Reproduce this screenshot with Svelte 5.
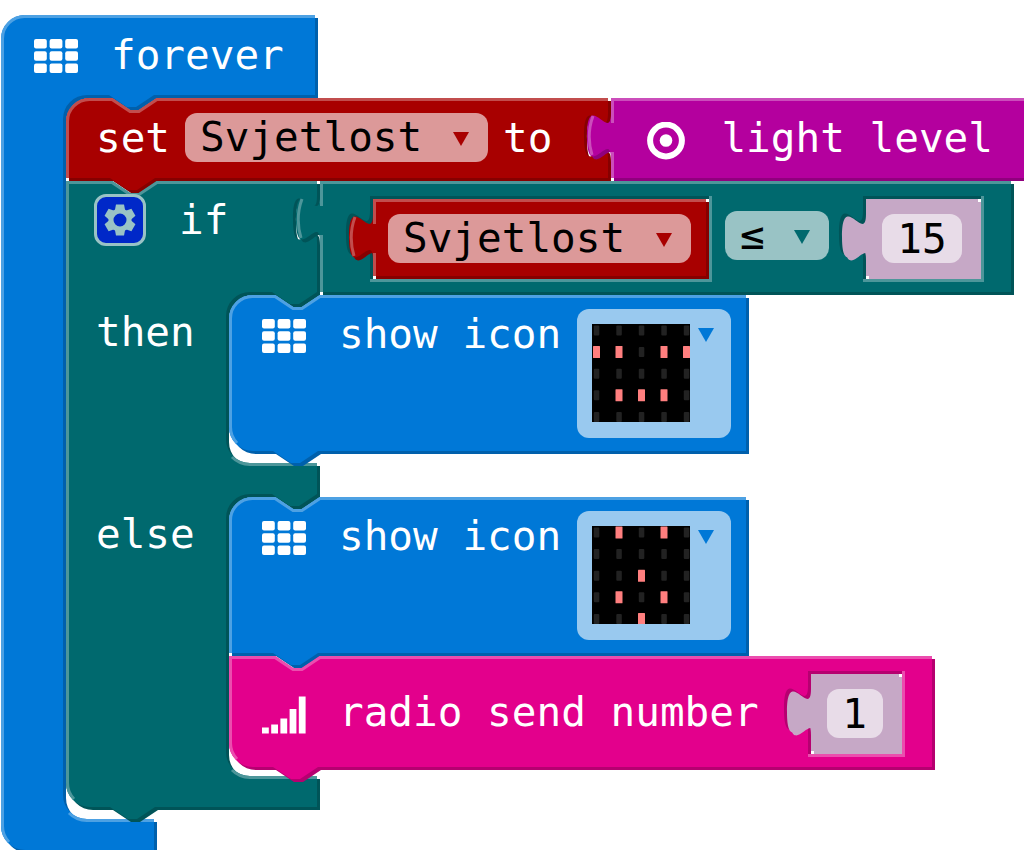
<script lang="ts">
  interface Box {
    w: number;
    h: number;
  }

  // Block outlines follow the measured size of their contents.
  const head: Box = $state({ w: 317, h: 83 });
  const body: Box = $state({ w: 900, h: 721 });
  const setBox: Box = $state({ w: 545, h: 83 });
  const light: Box = $state({ w: 414, h: 83 });
  const ifHead: Box = $state({ w: 254, h: 114 });
  const thenBox: Box = $state({ w: 900, h: 168 });
  const elseBox: Box = $state({ w: 900, h: 279 });
  const compare: Box = $state({ w: 694, h: 114 });
  const variable: Box = $state({ w: 336, h: 80 });
  const limit: Box = $state({ w: 115, h: 80 });
  const happy: Box = $state({ w: 520, h: 159 });
  const sad: Box = $state({ w: 520, h: 159 });
  const radio: Box = $state({ w: 706, h: 114 });
  const message: Box = $state({ w: 91, h: 80 });

  let assigned = $state("Svjetlost");
  let compared = $state("Svjetlost");
  let operator = $state("≤");
  let threshold = $state("15");
  let payload = $state("1");

  const EDGE = 3;
  const FOOT = 34;
  const NOTCH = "l18,12 9,0 18,-12";
  const NOTCH_BACK = "l-18,12 -9,0 -18,-12";
  const TAB_DOWN = "c0,31 -24,-25 -24,23 s24,-8 24,23";
  const TAB_UP = "c0,-31 -24,25 -24,-23 s24,8 24,-23";

  const happyIcon = [".....", "##.##", ".....", ".###.", "....."];
  const sadIcon = [".#.#.", ".....", "..#..", ".#.#.", "..#.."];

  const top = (round: boolean, notch: boolean) =>
    (round ? "M0,24 A24,24 0 0 1 24,0" : "M0,0") + (notch ? `H46 ${NOTCH}` : "");

  function statement(box: Box, round: boolean, roundFoot: boolean, socket: boolean) {
    const w = box.w - EDGE;
    const h = box.h - EDGE;
    const side = socket ? `V15 ${TAB_DOWN}` : "";
    const foot = roundFoot ? "H24 a24,24 0 0 1 -24,-24" : "H0";
    return `${top(round, true)} H${w} ${side} V${h} H89 ${NOTCH_BACK} ${foot} Z`;
  }

  function statementLight(box: Box, round: boolean, roundFoot: boolean) {
    const h = box.h - EDGE;
    const start = roundFoot
      ? `M8,${h - 8} A23,23 0 0 1 1.5,${h - 24}`
      : `M1.5,${h}`;
    const corner = round ? "V24 A22,22 0 0 1 24,1.5" : "V1.5";
    return `${start} ${corner} H46 ${NOTCH} H${box.w - EDGE}`;
  }

  // A C-shaped block: a header and one or more slots that hold statements.
  function clamp(
    box: Box,
    slots: number[],
    indent: number,
    footWidth: number,
    nested: boolean,
  ) {
    const x = indent - EDGE;
    let y = box.h;
    let d = `${top(!nested, nested)} H${box.w - EDGE} ${nested ? `V15 ${TAB_DOWN}` : ""}`;
    for (const slot of slots) {
      d += ` V${y - EDGE} H${x + 91} ${NOTCH_BACK} H${x + 24} a24,24 0 0 0 -24,24`;
      d += ` V${y + slot - 24} a24,24 0 0 0 24,24 H${footWidth - EDGE}`;
      y += slot + FOOT;
    }
    d += ` V${y - EDGE} ${nested ? `H89 ${NOTCH_BACK}` : ""}`;
    return `${d} H24 a24,24 0 0 1 -24,-24 Z`;
  }

  function clampLight(
    box: Box,
    slots: number[],
    indent: number,
    footWidth: number,
    nested: boolean,
  ) {
    const x = indent - EDGE;
    let y = box.h;
    let d = "";
    for (const slot of slots) {
      const f = y + slot;
      d += `M${x + 6},${f - 6} A25,25 0 0 0 ${x + 24},${f + 1.5} H${footWidth - EDGE} `;
      y = f + FOOT;
    }
    const h = y - EDGE;
    const corner = nested ? `V1.5 H46 ${NOTCH}` : "V24 A22,22 0 0 1 24,1.5";
    return `${d} M8,${h - 8} A23,23 0 0 1 1.5,${h - 24} ${corner} H${box.w - EDGE}`;
  }

  function value(w: number, h: number) {
    return `M0,0 H${w} V${h} H0 V61 ${TAB_UP} Z`;
  }

  function valueLight(box: Box) {
    return `M1.5,${box.h - EDGE} V54 M-19,57 Q-25,37 -18,18 M1.5,25 V1.5 H${box.w - EDGE}`;
  }
</script>

{#snippet shape(path: string, highlight: string)}
  <svg class="shape" aria-hidden="true">
    <path class="dark" d={path} transform="translate(3 3)" />
    <path class="base" d={path} />
    <path class="light" d={highlight} />
  </svg>
{/snippet}

{#snippet inlineShape(box: Box, shadow: boolean)}
  <svg class="shape" aria-hidden="true">
    <path class="rim-dark" d={value(box.w + 3, box.h + 3)} transform="translate(-3 -3)" />
    <path class="rim-light" d={`M${box.w + 1.5},-3 V${box.h + 1.5} H-3`} />
    <path class="gap" d={`M${box.w - 3},0 h3 v3 h-3 z M0,${box.h - 3} h3 v3 h-3 z`} />
    <path
      class={shadow ? "base" : "dark"}
      d={value(box.w - 3, box.h - 3)}
      transform="translate(3 3)"
    />
    <path class="base" d={value(box.w - 3, box.h - 3)} />
    {#if !shadow}
      <path class="light" d={valueLight(box)} />
    {/if}
  </svg>
{/snippet}

{#snippet gridIcon()}
  <svg class="icon" width="44" height="34" viewBox="0 0 44 34" aria-hidden="true">
    {#each [0, 12.2, 24.4] as y}
      {#each [0, 15.6, 31.2] as x}
        <rect {x} {y} width="12.8" height="9.6" rx="2" />
      {/each}
    {/each}
  </svg>
{/snippet}

{#snippet arrow()}
  <svg class="arrow" width="16" height="14" viewBox="0 0 16 14" aria-hidden="true">
    <path d="M0,0 H16 L8,14 Z" />
  </svg>
{/snippet}

{#snippet variablePicker(id: string, current: string, pick: (name: string) => void)}
  <span class="picker">
    <select
      {id}
      class="field name"
      aria-label="Variable"
      value={current}
      onchange={(e) => pick(e.currentTarget.value)}
    >
      <option>Svjetlost</option>
    </select>
    {@render arrow()}
  </span>
{/snippet}

{#snippet leds(rows: string[])}
  <svg class="leds" width="98" height="98" viewBox="0 0 98 98" aria-hidden="true">
    <rect width="98" height="98" />
    {#each rows as row, r}
      {#each row as cell, c}
        {@const x = 4.5 + c * 22.5}
        {@const y = 6.5 + r * 21.6}
        {#if cell === "#"}
          <rect class="lit" x={x - 3.5} y={y - 6} width="7" height="12" rx="0.5" />
        {:else}
          <rect class="dim" x={x - 2.7} y={y - 5} width="5.5" height="10" rx="1" />
        {/if}
      {/each}
    {/each}
  </svg>
{/snippet}

{#snippet showIcon(box: Box, rows: string[], label: string, last: boolean)}
  <div class="block show blue" bind:offsetWidth={box.w} bind:offsetHeight={box.h}>
    {@render shape(statement(box, true, last, false), statementLight(box, true, last))}
    {@render gridIcon()}
    <span class="text">show icon</span>
    <button class="field matrix" type="button" aria-label={label} aria-haspopup="true">
      {@render leds(rows)}
      {@render arrow()}
    </button>
  </div>
{/snippet}

<main class="workspace">
  <div class="clamp blue">
    {@render shape(clamp(head, [body.h], 65, 156, false), clampLight(head, [body.h], 65, 156, false))}
    <div class="head" bind:offsetWidth={head.w} bind:offsetHeight={head.h}>
      {@render gridIcon()}
      <span class="text">forever</span>
    </div>

    <div class="slot outer" bind:offsetHeight={body.h}>
      <div class="row">
        <div class="block assign red" bind:offsetWidth={setBox.w} bind:offsetHeight={setBox.h}>
          {@render shape(statement(setBox, true, false, true), statementLight(setBox, true, false))}
          <label class="text" for="assigned">set</label>
          {@render variablePicker("assigned", assigned, (name) => (assigned = name))}
          <span class="text">to</span>
        </div>
        <div class="block sensor purple" bind:offsetWidth={light.w} bind:offsetHeight={light.h}>
          {@render shape(value(light.w - 3, light.h - 3), valueLight(light))}
          <svg class="icon" width="44" height="38" viewBox="0 0 44 38" aria-hidden="true">
            <circle class="ring" cx="22" cy="18.5" r="15.9" />
            <circle cx="22" cy="18.5" r="6.3" />
          </svg>
          <span class="text">light level</span>
        </div>
      </div>

      <div class="clamp teal">
        {@render shape(
          clamp(ifHead, [thenBox.h, elseBox.h], 163, 254, true),
          clampLight(ifHead, [thenBox.h, elseBox.h], 163, 254, true),
        )}
        <div class="row">
          <div class="condition" bind:offsetWidth={ifHead.w} bind:offsetHeight={ifHead.h}>
            <button class="gear" type="button" aria-label="Edit branches">
              <svg width="32" height="32" viewBox="-16 -16 32 32" aria-hidden="true">
                {#each [0, 60, 120, 180, 240, 300] as angle}
                  <path d="M-5.5,-8 L-4,-15.5 H4 L5.5,-8 Z" transform={`rotate(${angle})`} />
                {/each}
                <circle class="wheel" r="9" />
              </svg>
            </button>
            <span class="text">if</span>
          </div>

          <div class="block compare" bind:offsetWidth={compare.w} bind:offsetHeight={compare.h}>
            {@render shape(value(compare.w - 3, compare.h - 3), valueLight(compare))}
            <div
              class="block variable red in-teal"
              bind:offsetWidth={variable.w}
              bind:offsetHeight={variable.h}
            >
              {@render inlineShape(variable, false)}
              {@render variablePicker("compared", compared, (name) => (compared = name))}
            </div>
            <span class="picker operator">
              <select class="field" aria-label="Comparison" bind:value={operator}>
                <option>=</option>
                <option>≠</option>
                <option>&lt;</option>
                <option>≤</option>
                <option>&gt;</option>
                <option>≥</option>
              </select>
              {@render arrow()}
            </span>
            <div
              class="block number mauve in-teal"
              bind:offsetWidth={limit.w}
              bind:offsetHeight={limit.h}
            >
              {@render inlineShape(limit, true)}
              <input class="field two" aria-label="Light limit" bind:value={threshold} />
            </div>
          </div>
        </div>

        <div class="branch" bind:offsetHeight={thenBox.h}>
          <span class="text">then</span>
          <div class="slot">
            {@render showIcon(happy, happyIcon, "Happy face", true)}
          </div>
        </div>

        <div class="foot"></div>

        <div class="branch last" bind:offsetHeight={elseBox.h}>
          <span class="text">else</span>
          <div class="slot">
            {@render showIcon(sad, sadIcon, "Sad face", false)}
            <div class="block send pink" bind:offsetWidth={radio.w} bind:offsetHeight={radio.h}>
              {@render shape(statement(radio, false, true, false), statementLight(radio, false, true))}
              <svg class="icon" width="44" height="38" viewBox="0 0 44 38" aria-hidden="true">
                <rect x="0" y="31.5" width="6.8" height="6" />
                <rect x="9.2" y="28.5" width="6.8" height="9" />
                <rect x="18.4" y="22.5" width="6.8" height="15" />
                <rect x="27.6" y="13" width="6.8" height="24.5" />
                <rect x="36.8" y="0.5" width="6.8" height="37" />
              </svg>
              <label class="text" for="payload">radio send number</label>
              <div
                class="block number mauve in-pink"
                bind:offsetWidth={message.w}
                bind:offsetHeight={message.h}
              >
                {@render inlineShape(message, true)}
                <input id="payload" class="field one" bind:value={payload} />
              </div>
            </div>
          </div>
        </div>

        <div class="foot"></div>
      </div>
    </div>
    <div class="foot"></div>
  </div>
</main>

<style>
  :global(body) {
    background: #fff;
  }

  .workspace {
    box-sizing: border-box;
    height: 100vh;
    padding: 15px 0 0 1px;
    overflow: hidden;
    font-family: "DejaVu Sans Mono", monospace;
    font-size: 41px;
    line-height: 42px;
    color: #fff;
  }

  .blue {
    --base: #0078d7;
    --dark: #0060ac;
    --light: #4da1e3;
  }

  .red {
    --base: #a80000;
    --dark: #860000;
    --light: #c24d4d;
  }

  .purple {
    --base: #b4009e;
    --dark: #90007e;
    --light: #cb4dbb;
  }

  .teal {
    --base: #00696e;
    --dark: #005458;
    --light: #4d969a;
  }

  .pink {
    --base: #e3008c;
    --dark: #b60070;
    --light: #eb4dae;
  }

  .mauve {
    --base: #c6a8c6;
  }

  .in-teal {
    --rim-dark: #005458;
    --rim-light: #4d969a;
  }

  .in-pink {
    --rim-dark: #b60070;
    --rim-light: #eb4dae;
  }

  .clamp,
  .block {
    position: relative;
    box-sizing: border-box;
  }

  .block {
    display: flex;
    align-items: flex-start;
    width: max-content;
    flex: none;
  }

  .shape {
    position: absolute;
    top: 0;
    left: 0;
    width: 100%;
    height: 100%;
    overflow: visible;
    pointer-events: none;
  }

  .base {
    fill: var(--base);
  }

  .dark {
    fill: var(--dark);
  }

  .light {
    fill: none;
    stroke: var(--light);
    stroke-width: 3;
  }

  .rim-dark {
    fill: var(--rim-dark);
  }

  .rim-light {
    fill: none;
    stroke: var(--rim-light);
    stroke-width: 3;
  }

  .gap {
    fill: #fff;
  }

  .text {
    position: relative;
    white-space: pre;
    flex: none;
  }

  .icon {
    position: relative;
    flex: none;
    fill: #fff;
  }

  .ring {
    fill: none;
    stroke: #fff;
    stroke-width: 6;
  }

  .row,
  .branch {
    display: flex;
    align-items: flex-start;
  }

  .head {
    display: flex;
    align-items: flex-start;
    gap: 33px;
    width: max-content;
    padding: 19px 34px 22px 33px;
  }

  .head .icon,
  .sensor .icon {
    margin-top: 5px;
  }

  .outer {
    padding: 0 0 9px 65px;
  }

  .foot {
    height: 34px;
  }

  .assign {
    gap: 15px;
    padding: 15px 59px 19px 30px;
  }

  .assign .text {
    margin-top: 4px;
  }

  .sensor {
    gap: 33px;
    padding: 19px 35px 21px 33px;
  }

  .condition {
    display: flex;
    align-items: flex-start;
    gap: 33px;
    box-sizing: border-box;
    width: 254px;
    height: 114px;
    padding: 13px 0 0 28px;
    flex: none;
  }

  .condition .text {
    margin-top: 5px;
  }

  .gear {
    position: relative;
    display: flex;
    align-items: center;
    justify-content: center;
    box-sizing: border-box;
    width: 52px;
    height: 52px;
    padding: 0;
    border: 3px solid #99c3c5;
    border-radius: 12px;
    background: #0028c8;
    fill: #99c3c5;
    flex: none;
  }

  .wheel {
    fill: none;
    stroke: #99c3c5;
    stroke-width: 5;
  }

  .compare {
    padding: 18px 33px 16px 53px;
  }

  .variable {
    padding: 15px 18px 16px 15px;
  }

  .number {
    padding: 15px 19px 16px 16px;
  }

  .operator {
    margin: 12px 37px 0 16px;
  }

  .picker {
    position: relative;
    display: flex;
  }

  .field {
    box-sizing: border-box;
    height: 49px;
    margin: 0;
    border: 0;
    border-radius: 12px;
    background: rgba(255, 255, 255, 0.6);
    color: #000;
    font: inherit;
    appearance: none;
  }

  select.field {
    width: 104px;
    padding: 0 15px;
    line-height: 49px;
  }

  select.name {
    width: 303px;
  }

  input.field {
    position: relative;
    padding: 0;
    text-align: center;
  }

  .one {
    width: 56px;
  }

  .two {
    width: 80px;
  }

  .arrow {
    fill: var(--base);
    pointer-events: none;
  }

  .picker .arrow {
    position: absolute;
    top: 19px;
    right: 19px;
  }

  .branch .text {
    width: 133px;
    padding: 16px 0 0 30px;
  }

  .branch {
    padding-bottom: 9px;
  }

  .branch.last {
    padding-bottom: 6px;
  }

  .show {
    padding: 14px 18px 16px 33px;
  }

  .show .icon {
    margin: 10px 33px 0 0;
  }

  .show .text {
    width: auto;
    margin-top: 4px;
    padding: 0 16px 0 0;
  }

  .matrix {
    position: relative;
    display: flex;
    align-items: flex-start;
    gap: 8px;
    width: 154px;
    height: 129px;
    padding: 15px;
  }

  .matrix .arrow {
    margin-top: 4px;
  }

  .lit {
    fill: #ff7f7f;
  }

  .dim {
    fill: #222;
  }

  .send {
    padding: 18px 33px 16px;
  }

  .send .icon {
    margin: 22px 33px 0 0;
  }

  .send .text {
    width: auto;
    margin-top: 17px;
    padding: 0 52px 0 0;
  }
</style>
